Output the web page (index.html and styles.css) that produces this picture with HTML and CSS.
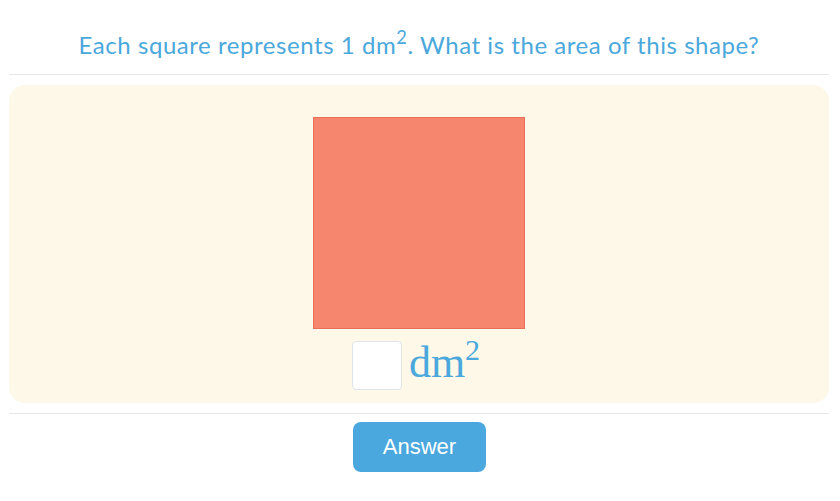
FILE: index.html
```html
<!DOCTYPE html>
<html lang="en">
<head>
<meta charset="utf-8">
<title>Area question</title>
<link rel="stylesheet" href="styles.css">
</head>
<body>
<div class="page">
  <div class="question">Each square represents 1 dm<sup>2</sup>. What is the area of this shape?</div>
  <hr class="rule">
  <div class="panel">
    <div class="shape"></div>
    <div class="answer-row">
      <div class="answer-input"></div>
      <span class="unit">dm<sup>2</sup></span>
    </div>
  </div>
  <hr class="rule">
  <div class="actions">
    <button class="answer-btn">Answer</button>
  </div>
</div>
</body>
</html>
```
FILE: styles.css
```css
html, body {
  margin: 0;
  padding: 0;
  background: #ffffff;
}
.page {
  width: 820px;
  margin-left: 9px;
}
.question {
  padding: 29px 0 14px;
  height: 31px;
  line-height: 31px;
  text-align: center;
  font-family: Lato, "Open Sans", sans-serif;
  font-size: 24px;
  letter-spacing: 0.55px;
  color: #4aa8dc;
}
.question sup {
  font-size: 0.76em;
  line-height: 0;
  vertical-align: 10px;
}
.rule {
  margin: 0;
  border: 0;
  border-top: 1px solid #e3e7ec;
  height: 0;
}
.panel {
  margin: 10px 0;
  background: #fef8e8;
  border-radius: 16px;
  padding: 32px 0 13px;
  display: flex;
  flex-direction: column;
  align-items: center;
}
.shape {
  width: 210px;
  height: 210px;
  background: #f6866e;
  border: 1px solid #e8705a;
}
.answer-row {
  margin-top: 12px;
  height: 49px;
  display: flex;
  align-items: flex-start;
  gap: 7px;
  padding-right: 6px;
}
.answer-input {
  width: 48px;
  height: 47px;
  background: #ffffff;
  border: 1px solid #dfe4ea;
  border-radius: 4px;
}
.unit {
  font-family: "Liberation Serif", serif;
  font-size: 44px;
  line-height: 44px;
  color: #4aa8dc;
}
.unit sup {
  font-size: 30px;
  line-height: 0;
  vertical-align: 17px;
}
.actions {
  display: flex;
  justify-content: center;
  padding-top: 8px;
}
.answer-btn {
  width: 133px;
  height: 50px;
  border: 0;
  border-radius: 8px;
  background: #4aa8de;
  color: #ffffff;
  font-family: "Liberation Sans", Arial, sans-serif;
  font-size: 22px;
  padding: 0;
  margin-left: 1px;
}
```
